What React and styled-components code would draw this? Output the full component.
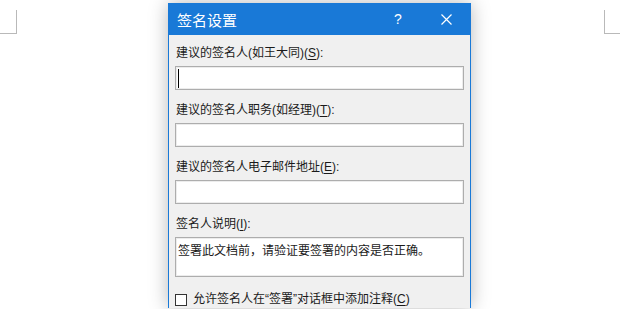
import React from 'react'
import styled, { createGlobalStyle } from 'styled-components'

const GlobalStyle = createGlobalStyle`
  html, body {
    margin: 0;
    padding: 0;
    background: #fff;
    overflow: hidden;
  }
  body {
    font-family: "Liberation Sans", "Noto Sans CJK SC", sans-serif;
  }
`;

const Page = styled.div`
  position: relative;
  width: 620px;
  height: 309px;
  background: #fff;
  overflow: hidden;
`;

// page corner marks of the document behind the dialog
const CornerMark = styled.div`
  position: absolute;
  top: 10px;
  ${({ side }) => (side === 'left' ? 'left: 0;' : 'left: 604px;')}
  width: 16px;
  height: 23px;
  border-bottom: 1px solid #b9b9b9;
  ${({ side }) =>
    side === 'left' ? 'border-right: 1px solid #b9b9b9;' : 'border-left: 1px solid #b9b9b9;'}
`;

const Dialog = styled.div`
  margin: 3px 0 0 168px;
  width: 301px;
  border: 1px solid #1979d7;
  border-top: none;
  border-bottom: none;
  background: #f0f0f0;
  box-shadow: 0 0 18px rgba(0, 0, 0, 0.28);
`;

const TitleBar = styled.div`
  height: 32px;
  background: #1979d7;
  color: #fff;
  display: flex;
  align-items: center;
  padding-left: 8px;
  font-family: "Noto Sans CJK SC", sans-serif;
  font-size: 15px;
`;

const Title = styled.span`
  flex: 1;
  padding-top: 1px;
`;

const TitleButton = styled.div`
  width: 48px;
  height: 32px;
  display: flex;
  align-items: center;
  justify-content: center;
  font-family: "Liberation Sans", sans-serif;
  font-size: 14px;
`;

const Body = styled.div`
  padding: 10px 6px 0;
  display: flex;
  flex-direction: column;
  gap: 12px;
`;

const Field = styled.div`
  display: flex;
  flex-direction: column;
  gap: 4px;
`;

const Label = styled.div`
  font-size: 12px;
  line-height: 17px;
  color: #1a1a1a;
  padding-left: 1px;
  white-space: nowrap;

  u {
    text-decoration-thickness: 1px;
    text-underline-offset: 2px;
  }
`;

const Input = styled.div`
  height: ${({ tall }) => (tall ? 40 : 24)}px;
  box-sizing: border-box;
  background: #fff;
  border: 1px solid #adadad;
  box-shadow: inset 0 0 0 1px #ececec;
  padding: 5px 2px 0;
  font-size: 12px;
  line-height: 17px;
  color: #1a1a1a;
  display: flex;
  align-items: flex-start;
`;

const Caret = styled.span`
  width: 1px;
  height: 19px;
  margin: -3px 0 0 0;
  background: #000;
`;

const CheckRow = styled.label`
  display: flex;
  align-items: center;
  gap: 6px;
  margin-top: 2px;
  font-size: 12px;
  line-height: 17px;
  color: #1a1a1a;
  white-space: nowrap;

  u {
    text-decoration-thickness: 1px;
    text-underline-offset: 2px;
  }
`;

const CheckBox = styled.span`
  width: 12px;
  height: 12px;
  box-sizing: border-box;
  border: 1px solid #333;
  background: #fff;
`;

const CloseIcon = () => (
  <svg width="11" height="11" viewBox="0 0 11 11">
    <path d="M0.5 0.5 L10.5 10.5 M10.5 0.5 L0.5 10.5" stroke="#fff" strokeWidth="1.2" fill="none" />
  </svg>
);

export default function App() {
  return (
    <>
      <GlobalStyle />
      <Page>
        <CornerMark side="left" />
        <CornerMark side="right" />
        <Dialog>
          <TitleBar>
            <Title>签名设置</Title>
            <TitleButton>?</TitleButton>
            <TitleButton>
              <CloseIcon />
            </TitleButton>
          </TitleBar>
          <Body>
            <Field>
              <Label>
                建议的签名人(如王大同)(<u>S</u>):
              </Label>
              <Input>
                <Caret />
              </Input>
            </Field>
            <Field>
              <Label>
                建议的签名人职务(如经理)(<u>T</u>):
              </Label>
              <Input />
            </Field>
            <Field>
              <Label>
                建议的签名人电子邮件地址(<u>E</u>):
              </Label>
              <Input />
            </Field>
            <Field>
              <Label>
                签名人说明(<u>I</u>):
              </Label>
              <Input tall>签署此文档前，请验证要签署的内容是否正确。</Input>
            </Field>
            <CheckRow>
              <CheckBox />
              <span>
                允许签名人在“签署”对话框中添加注释(<u>C</u>)
              </span>
            </CheckRow>
          </Body>
        </Dialog>
      </Page>
    </>
  )
}
